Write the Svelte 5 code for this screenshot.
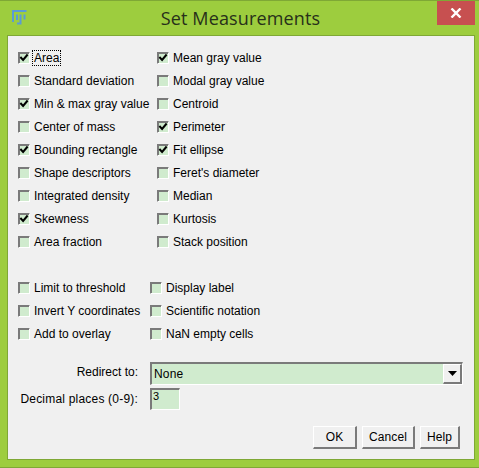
<script>
  const main = [
    ["Area", true, "Mean gray value", true],
    ["Standard deviation", false, "Modal gray value", false],
    ["Min & max gray value", true, "Centroid", false],
    ["Center of mass", false, "Perimeter", true],
    ["Bounding rectangle", true, "Fit ellipse", true],
    ["Shape descriptors", false, "Feret's diameter", false],
    ["Integrated density", false, "Median", false],
    ["Skewness", true, "Kurtosis", false],
    ["Area fraction", false, "Stack position", false],
  ];
  const options = [
    ["Limit to threshold", "Display label"],
    ["Invert Y coordinates", "Scientific notation"],
    ["Add to overlay", "NaN empty cells"],
  ];
</script>

{#snippet check(label, on, focused)}
  <div class="check">
    <span class="box">
      {#if on}
        <svg width="11" height="11" viewBox="0 0 11 11"><path d="M1.5 5 L4.5 8.2 L9.5 2.2" fill="none" stroke="#000" stroke-width="2.2" /></svg>
      {/if}
    </span>
    <span class="label" class:focused>{label}</span>
  </div>
{/snippet}

<div class="window">
  <header class="titlebar">
    <svg class="appicon" width="15" height="15" viewBox="0 0 15 15">
      <path d="M1 12V1H14.5M5 4.5V10M8.5 4.5V13.5H5M12.5 4.5V9.5" fill="none" stroke="#5b9bd5" stroke-width="2" />
    </svg>
    <h1>Set Measurements</h1>
    <button class="close" aria-label="Close">
      <svg width="12" height="10" viewBox="0 0 12 10"><path d="M1.5 0.5 L10.5 9.5 M10.5 0.5 L1.5 9.5" stroke="#fff" stroke-width="2.4" /></svg>
    </button>
  </header>

  <div class="client">
    <div class="grid main-grid">
      {#each main as row, i}
        {@render check(row[0], row[1], i === 0)}
        {@render check(row[2], row[3], false)}
      {/each}
    </div>

    <div class="grid option-grid">
      {#each options as row}
        {@render check(row[0], false, false)}
        {@render check(row[1], false, false)}
      {/each}
    </div>

    <div class="fields">
      <span class="field-label redirect">Redirect to:</span>
      <div class="select">
        <span>None</span>
        <span class="arrow">
          <svg width="9" height="5" viewBox="0 0 9 5"><path d="M0 0H9L4.5 5Z" fill="#000" /></svg>
        </span>
      </div>
      <span class="field-label decimal">Decimal places (0-9):</span>
      <div class="input">3</div>
    </div>

    <div class="buttons">
      <button class="ok">OK</button>
      <button class="cancel">Cancel</button>
      <button class="help">Help</button>
    </div>
  </div>
</div>

<style>
  :global(body) {
    margin: 0;
    background: #9dcd3e;
  }
  .window {
    width: 479px;
    height: 468px;
    box-sizing: border-box;
    background: #9dcd3e;
    border-top: 1px solid #7fa835;
    border-bottom: 1px solid #7fa835;
    display: flex;
    flex-direction: column;
    font-family: "Liberation Sans", Arial, sans-serif;
    font-size: 12px;
    color: #000;
  }
  .titlebar {
    height: 34px;
    flex: none;
    position: relative;
    display: flex;
    justify-content: center;
    align-items: center;
  }
  .appicon {
    position: absolute;
    left: 12px;
    top: 9px;
  }
  h1 {
    margin: 0 0 0 2px;
    font-size: 18px;
    font-weight: normal;
    color: #27301a;
    letter-spacing: 0.15px;
    font-family: "Open Sans", "Liberation Sans", sans-serif;
  }
  .close {
    position: absolute;
    top: 0;
    right: 4px;
    width: 38px;
    height: 24px;
    padding: 0;
    border: 0;
    background: #c75050;
    display: flex;
    align-items: center;
    justify-content: center;
  }
  .client {
    flex: 1;
    margin: 0 4px 7px 7px;
    border: 1px solid #7fa835;
    background: #f0f0f0;
    display: flex;
    flex-direction: column;
    position: relative;
  }
  .grid {
    display: grid;
    grid-auto-rows: 23px;
    margin-left: 10px;
  }
  .main-grid {
    grid-template-columns: 139px auto;
    margin-top: 10px;
  }
  .option-grid {
    grid-template-columns: 132px auto;
    margin-top: 23px;
  }
  .check {
    display: flex;
    align-items: center;
    height: 23px;
  }
  .box {
    width: 10px;
    height: 10px;
    flex: none;
    background: #d0ebce;
    border-top: 1px solid #7a7a7a;
    border-left: 1px solid #7a7a7a;
    border-right: 1px solid #fff;
    border-bottom: 1px solid #fff;
    box-shadow: inset 1px 1px 0 #7a7a7a;
    display: flex;
    align-items: center;
    justify-content: center;
  }
  .label {
    margin-left: 2px;
    padding: 0 1px;
    white-space: nowrap;
    border: 1px solid transparent;
  }
  .label.focused {
    border: 1px dotted #000;
  }
  .fields {
    display: grid;
    grid-template-columns: 130px 313px;
    column-gap: 12px;
    margin: 17px 0 0 0;
    row-gap: 3px;
    align-items: center;
  }
  .field-label {
    text-align: right;
  }
  .redirect {
    margin-top: -3px;
  }
  .decimal {
    letter-spacing: 0.2px;
  }
  .select {
    height: 23px;
    box-sizing: border-box;
    background: #d0ebce;
    border-top: 2px solid #7a7a7a;
    border-left: 2px solid #7a7a7a;
    border-right: 1px solid #fff;
    border-bottom: 1px solid #fff;
    display: flex;
    justify-content: space-between;
    align-items: stretch;
    line-height: 20px;
    padding-left: 2px;
    font-size: 12px;
    letter-spacing: 0.2px;
  }
  .arrow {
    width: 19px;
    background: #f0f0f0;
    border-top: 1px solid #fff;
    border-left: 1px solid #fff;
    border-right: 2px solid #7a7a7a;
    border-bottom: 2px solid #7a7a7a;
    box-sizing: border-box;
    display: flex;
    align-items: center;
    justify-content: center;
  }
  .input {
    width: 30px;
    height: 22px;
    box-sizing: border-box;
    background: #d0ebce;
    border-top: 2px solid #7a7a7a;
    border-left: 2px solid #7a7a7a;
    border-right: 1px solid #fff;
    border-bottom: 1px solid #fff;
    font-size: 11px;
    line-height: 13px;
    padding-left: 1px;
  }
  .buttons {
    margin-top: auto;
    margin-bottom: 10px;
    margin-right: 14px;
    display: flex;
    justify-content: flex-end;
    gap: 5px;
  }
  .buttons button {
    height: 23px;
    padding: 0;
    background: #f0f0f0;
    border-top: 1px solid #fff;
    border-left: 1px solid #fff;
    border-right: 2px solid #7a7a7a;
    border-bottom: 2px solid #7a7a7a;
    border-radius: 0;
    font: inherit;
    letter-spacing: 0.1px;
    color: #000;
  }
  .ok { width: 44px; }
  .cancel { width: 53px; }
  .help { width: 40px; }
</style>
